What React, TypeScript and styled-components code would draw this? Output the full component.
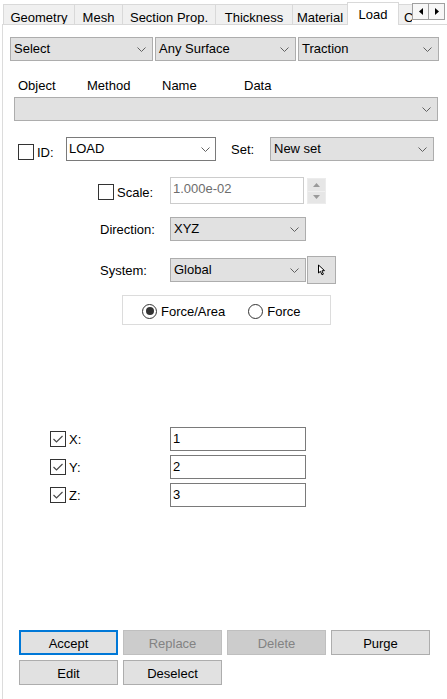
import styled, { createGlobalStyle } from 'styled-components';

const GlobalStyle = createGlobalStyle`
  html, body {
    margin: 0;
    padding: 0;
    background: #fff;
  }
  body {
    font-family: 'Liberation Sans', Arial, sans-serif;
    font-size: 13px;
    color: #000;
  }
  * {
    box-sizing: border-box;
  }
`;

const tabs = [
  { label: 'Geometry', w: 72 },
  { label: 'Mesh', w: 49 },
  { label: 'Section Prop.', w: 94 },
  { label: 'Thickness', w: 78 },
  { label: 'Material', w: 56 },
  { label: 'Load', w: 52, active: true },
];

const axes = [
  { name: 'X', value: '1' },
  { name: 'Y', value: '2' },
  { name: 'Z', value: '3' },
];

const buttons = [
  { label: 'Accept', focused: true },
  { label: 'Replace', disabled: true },
  { label: 'Delete', disabled: true },
  { label: 'Purge' },
  { label: 'Edit' },
  { label: 'Deselect' },
];

function Chevron() {
  return (
    <svg width="9" height="5" viewBox="0 0 9 5">
      <polyline points="0.5,0.5 4.5,4.5 8.5,0.5" fill="none" stroke="#606060" strokeWidth="1" />
    </svg>
  );
}

function Combo({ text, w, edit }: { text: string; w: number; edit?: boolean }) {
  return (
    <ComboBox $w={w} $edit={edit}>
      <ComboText $edit={edit}>{text}</ComboText>
      <Chevron />
    </ComboBox>
  );
}

function Check({ checked }: { checked?: boolean }) {
  return (
    <CheckBox>
      {checked && (
        <svg width="14" height="14" viewBox="0 0 14 14">
          <polyline points="2.5,7 5.5,10 11.5,4" fill="none" stroke="#4a4a4a" strokeWidth="1.2" />
        </svg>
      )}
    </CheckBox>
  );
}

export default function App() {
  return (
    <>
      <GlobalStyle />
      <Window>
        <TabStrip>
          {tabs.map((t) => (
            <Tab key={t.label} $w={t.w} $active={t.active}>
              {t.label}
            </Tab>
          ))}
          {/* the last tab is cut by the scroll arrows */}
          <ClippedTab>Constraint</ClippedTab>
          <TabScroll>
            <ScrollBtn>
              <svg width="4" height="7" viewBox="0 0 4 7">
                <polygon points="4,0 0,3.5 4,7" fill="#000" />
              </svg>
            </ScrollBtn>
            <ScrollBtn>
              <svg width="4" height="7" viewBox="0 0 4 7">
                <polygon points="0,0 4,3.5 0,7" fill="#000" />
              </svg>
            </ScrollBtn>
          </TabScroll>
        </TabStrip>

        <Panel>
          <FilterRow>
            <Combo text="Select" w={143} />
            <Combo text="Any Surface" w={141} />
            <Combo text="Traction" w={141} />
          </FilterRow>

          <HeaderRow>
            <span>Object</span>
            <span>Method</span>
            <span>Name</span>
            <span>Data</span>
          </HeaderRow>

          <WideRow>
            <Combo text="" w={424} />
          </WideRow>

          <FieldRow $top={16} $left={15}>
            <CheckField $w={48} $dy={6}>
              <Check />
              <span>ID:</span>
            </CheckField>
            <Combo text="LOAD" w={150} edit />
            <SetLabel>Set:</SetLabel>
            <Combo text="New set" w={164} />
          </FieldRow>

          <FieldRow $top={16} $left={95}>
            <CheckField $w={72} $dy={3}>
              <Check />
              <span>Scale:</span>
            </CheckField>
            <TextInput $w={134} $h={27} $disabled>
              1.000e-02
            </TextInput>
            <Spinner>
              <SpinHalf>
                <svg width="7" height="4" viewBox="0 0 7 4">
                  <polygon points="0,4 3.5,0 7,4" fill="#9a9a9a" />
                </svg>
              </SpinHalf>
              <SpinHalf>
                <svg width="7" height="4" viewBox="0 0 7 4">
                  <polygon points="0,0 3.5,4 7,0" fill="#9a9a9a" />
                </svg>
              </SpinHalf>
            </Spinner>
          </FieldRow>

          <FieldRow $top={13} $left={97}>
            <FieldLabel>Direction:</FieldLabel>
            <Combo text="XYZ" w={136} />
          </FieldRow>

          <FieldRow $top={15} $left={97}>
            <FieldLabel>System:</FieldLabel>
            <Combo text="Global" w={136} />
            <PickButton>
              <svg width="9" height="12" viewBox="0 0 9 12">
                <path
                  d="M1.5 1 L1.5 9 L3.4 7.3 L5 10.8 L6.4 10.1 L4.9 6.8 L7.5 6.6 Z"
                  fill="#fff"
                  stroke="#000"
                  strokeWidth="1"
                  strokeLinejoin="round"
                />
              </svg>
            </PickButton>
          </FieldRow>

          <RadioRow>
            <RadioGroup>
              <RadioItem>
                <RadioCircle $on />
                <span>Force/Area</span>
              </RadioItem>
              <RadioItem>
                <RadioCircle />
                <span>Force</span>
              </RadioItem>
            </RadioGroup>
          </RadioRow>

          <AxisList>
            {axes.map((a) => (
              <FieldRow key={a.name} $top={0} $left={47}>
                <CheckField $w={120} $dy={0}>
                  <Check checked />
                  <span>{a.name}:</span>
                </CheckField>
                <TextInput $w={136} $h={24}>
                  {a.value}
                </TextInput>
              </FieldRow>
            ))}
          </AxisList>

          <ButtonGrid>
            {buttons.map((b) => (
              <ActionButton key={b.label} $focused={b.focused} $disabled={b.disabled}>
                {b.label}
              </ActionButton>
            ))}
          </ButtonGrid>
        </Panel>
      </Window>
    </>
  );
}

const Window = styled.div`
  width: 447px;
  height: 699px;
  overflow: hidden;
  background: #fff;
`;

const TabStrip = styled.div`
  position: relative;
  z-index: 1;
  height: 24px;
  display: flex;
  align-items: flex-end;
  padding-left: 3px;
  white-space: nowrap;
`;

const Tab = styled.div<{ $w: number; $active?: boolean }>`
  flex: none;
  width: ${(p) => p.$w}px;
  height: ${(p) => (p.$active ? 23 : 20)}px;
  margin-left: -1px;
  margin-bottom: ${(p) => (p.$active ? -1 : 0)}px;
  padding-top: ${(p) => (p.$active ? 4 : 5)}px;
  line-height: 15px;
  text-align: center;
  overflow: hidden;
  background: ${(p) => (p.$active ? '#fff' : '#f0f0f0')};
  border: 1px solid #d9d9d9;
  border-bottom: none;
  position: relative;
  z-index: ${(p) => (p.$active ? 2 : 1)};
  &:first-child {
    margin-left: 0;
  }
`;

const ClippedTab = styled.div`
  flex: none;
  width: 14px;
  height: 20px;
  margin-left: -1px;
  padding: 5px 0 0 5px;
  line-height: 15px;
  overflow: hidden;
  background: #f0f0f0;
  border-top: 1px solid #d9d9d9;
  border-left: 1px solid #d9d9d9;
`;

const TabScroll = styled.div`
  flex: none;
  align-self: flex-start;
  margin-top: 3px;
  display: flex;
`;

const ScrollBtn = styled.div`
  flex: none;
  width: 17px;
  height: 17px;
  display: flex;
  align-items: center;
  justify-content: center;
  background: #f7f7f7;
  border: 1px solid #a0a0a0;
  & + & {
    margin-left: -1px;
  }
`;

const Panel = styled.div`
  margin-left: 2px;
  height: 675px;
  border-left: 1px solid #dcdcdc;
  border-top: 1px solid #d9d9d9;
  display: flex;
  flex-direction: column;
`;

const FilterRow = styled.div`
  margin-top: 12px;
  padding-left: 7px;
  display: flex;
  gap: 2px;
`;

const HeaderRow = styled.div`
  margin-top: 17px;
  padding-left: 15px;
  display: grid;
  grid-template-columns: 69px 75px 82px auto;
  line-height: 15px;
`;

const WideRow = styled.div`
  margin-top: 4px;
  padding-left: 11px;
  display: flex;
`;

const ComboBox = styled.div<{ $w: number; $edit?: boolean }>`
  flex: none;
  width: ${(p) => p.$w}px;
  height: 24px;
  display: flex;
  align-items: center;
  justify-content: space-between;
  padding-right: ${(p) => (p.$edit ? 5 : 6)}px;
  background: ${(p) => (p.$edit ? '#fff' : '#e1e1e1')};
  border: 1px solid ${(p) => (p.$edit ? '#7a7a7a' : '#adadad')};
`;

const ComboText = styled.span<{ $edit?: boolean }>`
  padding-left: ${(p) => (p.$edit ? 2 : 3)}px;
  margin-top: ${(p) => (p.$edit ? -2 : -1)}px;
  line-height: 15px;
`;

const FieldRow = styled.div<{ $top: number; $left: number }>`
  margin-top: ${(p) => p.$top}px;
  padding-left: ${(p) => p.$left}px;
  display: flex;
  align-items: center;
`;

const CheckField = styled.label<{ $w: number; $dy: number }>`
  flex: none;
  width: ${(p) => p.$w}px;
  margin-top: ${(p) => p.$dy}px;
  display: flex;
  align-items: center;
  gap: 3px;
  line-height: 15px;
`;

const CheckBox = styled.span`
  flex: none;
  width: 16px;
  height: 16px;
  display: flex;
  align-items: center;
  justify-content: center;
  background: #fff;
  border: 1px solid #333;
`;

const SetLabel = styled.span`
  width: 39px;
  margin-left: 15px;
  line-height: 15px;
`;

const FieldLabel = styled.span`
  flex: none;
  width: 70px;
  line-height: 15px;
`;

const TextInput = styled.div<{ $w: number; $h: number; $disabled?: boolean }>`
  flex: none;
  align-self: flex-start;
  width: ${(p) => p.$w}px;
  height: ${(p) => p.$h}px;
  padding: 3px 2px 0;
  line-height: 15px;
  background: #fff;
  color: ${(p) => (p.$disabled ? '#6d6d6d' : '#000')};
  border: 1px solid ${(p) => (p.$disabled ? '#cccccc' : '#7a7a7a')};
`;

const Spinner = styled.div`
  flex: none;
  align-self: flex-start;
  margin-left: 3px;
  margin-top: 1px;
  width: 19px;
  height: 26px;
  display: flex;
  flex-direction: column;
  gap: 1px;
  background: #f0f0f0;
  border: 1px solid #ececec;
`;

const SpinHalf = styled.div`
  flex: 1;
  display: flex;
  align-items: center;
  justify-content: center;
  background: #e6e6e6;
`;

const PickButton = styled.div`
  flex: none;
  width: 29px;
  height: 28px;
  margin-left: 1px;
  display: flex;
  align-items: center;
  justify-content: center;
  background: #e1e1e1;
  border: 1px solid #adadad;
`;

const RadioRow = styled.div`
  margin-top: 11px;
  padding-left: 119px;
  display: flex;
`;

const RadioGroup = styled.div`
  width: 209px;
  height: 30px;
  padding: 2px 0 0 19px;
  display: flex;
  align-items: center;
  gap: 23px;
  border: 1px solid #dcdcdc;
`;

const RadioItem = styled.label`
  display: flex;
  align-items: center;
  gap: 4px;
  line-height: 15px;
`;

const RadioCircle = styled.span<{ $on?: boolean }>`
  flex: none;
  width: 15px;
  height: 15px;
  border-radius: 50%;
  border: 1px solid #333;
  background: #fff;
  display: flex;
  align-items: center;
  justify-content: center;
  &::after {
    content: '';
    display: ${(p) => (p.$on ? 'block' : 'none')};
    width: 8px;
    height: 8px;
    border-radius: 50%;
    background: #333;
  }
`;

const AxisList = styled.div`
  margin-top: 102px;
  display: flex;
  flex-direction: column;
  gap: 4px;
`;

const ButtonGrid = styled.div`
  margin-top: 123px;
  padding-left: 16px;
  display: grid;
  grid-template-columns: repeat(4, 99px);
  grid-auto-rows: 25px;
  gap: 5px;
`;

const ActionButton = styled.div<{ $focused?: boolean; $disabled?: boolean }>`
  display: flex;
  align-items: center;
  justify-content: center;
  padding-top: 1px;
  line-height: 15px;
  background: ${(p) => (p.$disabled ? '#cccccc' : '#e1e1e1')};
  color: ${(p) => (p.$disabled ? '#838383' : '#000')};
  border: ${(p) =>
    p.$focused ? '2px solid #0078d7' : `1px solid ${p.$disabled ? '#bfbfbf' : '#adadad'}`};
`;
